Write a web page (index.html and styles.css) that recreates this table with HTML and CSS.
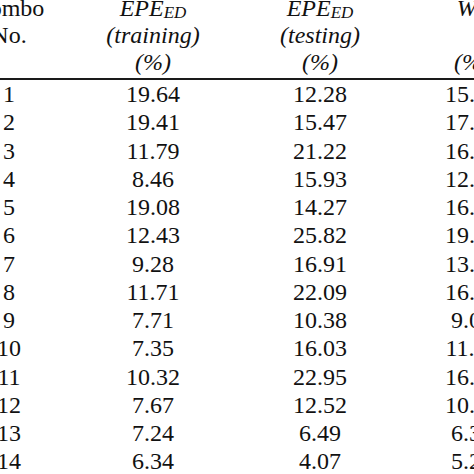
FILE: index.html
```html
<!DOCTYPE html>
<html>
<head>
<meta charset="utf-8">
<link rel="stylesheet" href="styles.css">
</head>
<body>
<table class="tbl">
  <colgroup>
    <col class="c1"><col class="c2"><col class="c3"><col class="c4">
  </colgroup>
  <thead>
    <tr>
      <th>Combo<br>No.</th>
      <th class="it">EPE<span class="sub">ED</span><br>(training)<br>(%)</th>
      <th class="it">EPE<span class="sub">ED</span><br>(testing)<br>(%)</th>
      <th class="it">W<span class="sub">E</span><br>&nbsp;<br>(%)</th>
    </tr>
  </thead>
  <tbody>
    <tr><td>1</td><td>19.64</td><td>12.28</td><td>15.31</td></tr>
    <tr><td>2</td><td>19.41</td><td>15.47</td><td>17.25</td></tr>
    <tr><td>3</td><td>11.79</td><td>21.22</td><td>16.14</td></tr>
    <tr><td>4</td><td>8.46</td><td>15.93</td><td>12.47</td></tr>
    <tr><td>5</td><td>19.08</td><td>14.27</td><td>16.52</td></tr>
    <tr><td>6</td><td>12.43</td><td>25.82</td><td>19.36</td></tr>
    <tr><td>7</td><td>9.28</td><td>16.91</td><td>13.18</td></tr>
    <tr><td>8</td><td>11.71</td><td>22.09</td><td>16.74</td></tr>
    <tr><td>9</td><td>7.71</td><td>10.38</td><td>9.02</td></tr>
    <tr><td>10</td><td>7.35</td><td>16.03</td><td>11.52</td></tr>
    <tr><td>11</td><td>10.32</td><td>22.95</td><td>16.41</td></tr>
    <tr><td>12</td><td>7.67</td><td>12.52</td><td>10.06</td></tr>
    <tr><td>13</td><td>7.24</td><td>6.49</td><td>6.35</td></tr>
    <tr><td>14</td><td>6.34</td><td>4.07</td><td>5.24</td></tr>
  </tbody>
</table>
</body>
</html>
```
FILE: styles.css
```css
html, body {
  margin: 0;
  padding: 0;
  background: #fff;
  overflow: hidden;
}
body {
  width: 474px;
  height: 474px;
  font-family: "Liberation Serif", "Times New Roman", serif;
  font-size: 24px;
  color: #111;
}
.tbl {
  table-layout: fixed;
  border-collapse: collapse;
  border-spacing: 0;
  margin-left: -31px;
  margin-top: -5px;
  width: 592px;
}
.c1 { width: 80px; }
.c2 { width: 208px; }
.c3 { width: 126px; }
.c4 { width: 178px; }
.tbl th {
  font-weight: normal;
  vertical-align: top;
  text-align: center;
  line-height: 27px;
  padding: 0 0 2px 0;
  border-bottom: 2px solid #1a1a1a;
  white-space: nowrap;
}
.tbl th.it {
  font-style: italic;
}
.sub {
  font-size: 17px;
  vertical-align: -2px;
  line-height: 1;
}
.tbl td {
  padding: 0;
  height: 28.25px;
  line-height: 28.25px;
  text-align: center;
  white-space: nowrap;
}
```
